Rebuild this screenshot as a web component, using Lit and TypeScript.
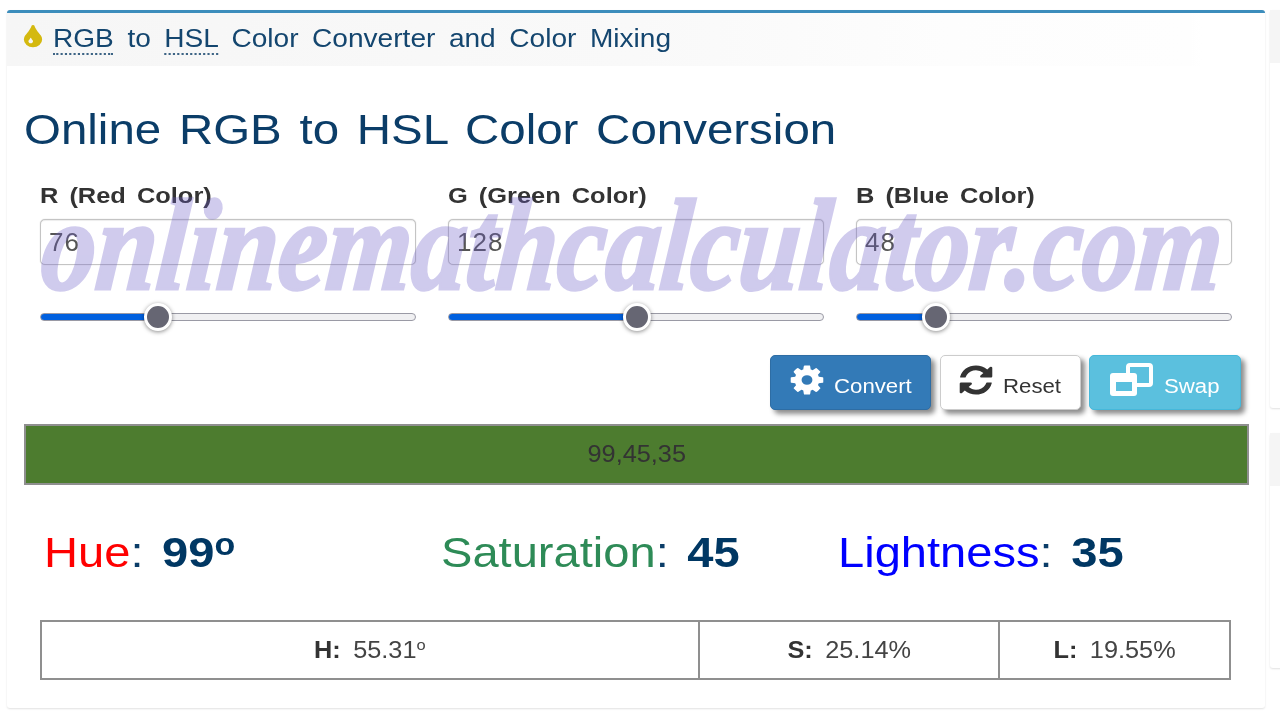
import { LitElement, html, css, svg } from "lit";
import { customElement } from "lit/decorators.js";

const TINT = "M896 1152q0-36-20-69-1-1-15.500-22.500t-25.500-38-25-44-21-50.500q-4-16-21-16t-21 16q-7 23-21 50.500t-25 44-25.500 38-15.500 22.500q-20 33-20 69 0 53 37.500 90.500t90.500 37.500 90.500-37.500 37.500-90.500zm512-128q0 212-150 362t-362 150-362-150-150-362q0-145 81-275 6-9 62.500-90.500t101-151 99.500-178 83-201.500q9-30 34-47t51-17 51.500 17 33.500 47q28 93 83 201.500t99.500 178 101 151 62.500 90.500q81 127 81 275z";
const COG = "M1152 896q0-106-75-181t-181-75-181 75-75 181 75 181 181 75 181-75 75-181zm512-109v222q0 12-8 23t-20 13l-185 28q-19 54-39 91 35 50 107 138 10 12 10 25t-9 23q-27 37-99 108t-94 71q-12 0-26-9l-138-108q-44 23-91 38-16 136-29 186-7 28-36 28h-222q-14 0-24.500-8.500t-11.500-21.500l-28-184q-49-16-90-37l-141 107q-10 9-25 9-14 0-25-11-126-114-165-168-7-10-7-23 0-12 8-23 15-21 51-66.500t54-70.500q-27-50-41-99l-183-27q-13-2-21-12.500t-8-23.500v-222q0-12 8-23t19-13l186-28q14-46 39-92-40-57-107-138-10-12-10-24 0-10 9-23 26-36 98.500-107.500t94.500-71.500q13 0 26 10l138 107q44-23 91-38 16-136 29-186 7-28 36-28h222q14 0 24.500 8.500t11.500 21.500l28 184q49 16 90 37l142-107q9-9 24-9 13 0 25 10 129 119 165 170 7 8 7 22 0 12-8 23-15 21-51 66.500t-54 70.500q26 50 41 98l183 28q13 2 21 12.500t8 23.500z";
const REFRESH = "M1639 1056q0 5-1 7-64 268-268 434.500t-478 166.500q-146 0-282.500-55t-243.500-157l-129 129q-19 19-45 19t-45-19-19-45v-448q0-26 19-45t45-19h448q26 0 45 19t19 45-19 45l-137 137q71 66 161 102t187 36q134 0 250-65t186-179q11-17 53-117 8-23 30-23h192q13 0 22.500 9.500t9.500 22.500zm25-800v448q0 26-19 45t-45 19h-448q-26 0-45-19t-19-45 19-45l138-138q-148-137-349-137-134 0-250 65t-186 179q-11 17-53 117-8 23-30 23h-199q-13 0-22.500-9.500t-9.500-22.500v-7q65-268 270-434.500t480-166.500q146 0 284 55.500t245 156.500l130-129q19-19 45-19t45 19 19 45z";

const fa = (d: string, w: number, h: number, color: string) => html`<svg width=${w} height=${h} viewBox="0 0 1792 1792" preserveAspectRatio="none" aria-hidden="true"><path d=${d} fill=${color}></path></svg>`;

const channels = [
  { label: "R (Red Color)", value: 76 },
  { label: "G (Green Color)", value: 128 },
  { label: "B (Blue Color)", value: 48 },
];

@customElement("app-root")
export class AppRoot extends LitElement {
  static styles = css`
    :host { display: block; width: 1280px; height: 720px; overflow: hidden; background: #fff; font-family: "Liberation Sans", Arial, sans-serif; color: #333; }
    * { box-sizing: border-box; }
    .page { display: flex; gap: 5px; padding: 10px 0 0 7px; width: 1300px; height: 720px; filter: blur(0.35px); }
    .card { position: relative; width: 1258px; height: 698px; background: #fff; border-top: 3px solid #3c8dbc; border-radius: 3px; box-shadow: 0 1px 2px rgba(0,0,0,.12); flex: none; overflow: hidden; }
    .w { display: inline-block; white-space: nowrap; transform-origin: left center; }
    .c { transform-origin: center center; }
    .head { height: 53px; display: flex; align-items: center; gap: 4px; padding: 0 0 0 10px; font-size: 26px; word-spacing: 5.3px; color: #14466f; background: linear-gradient(90deg, #f6f6f6 0%, #f9f9f9 50%, #fdfdfd 75%, #fefefe 94%, #fff 95%); }
    .head svg { flex: none; margin-top: -4px; }
    .head .w { transform: scaleX(1.08); margin-top: -2px; }
    abbr { text-decoration: none; border-bottom: 2px dotted #3d6485; line-height: 26px; }
    h1 { margin: 41px 0 0 17px; font-weight: 400; font-size: 42px; line-height: 46px; word-spacing: 4px; color: #0b3d68; }
    h1 .w { transform: scaleX(1.13); }
    .fields { display: grid; grid-template-columns: 376px 376px 376px; column-gap: 32px; margin: 30px 0 0 33px; }
    label { display: block; font-weight: 700; font-size: 22.5px; line-height: 26px; word-spacing: 3.5px; color: #333; }
    label .w { transform: scaleX(1.13); }
    input[type=text] { display: block; width: 100%; height: 46px; margin-top: 10px; padding: 0 8px; border: 1px solid #c4c4c4; border-radius: 5px; box-shadow: 0 0 1px #bbb, inset 0 1px 1px rgba(0,0,0,.075); font: 26px "Liberation Sans", Arial, sans-serif; letter-spacing: 1px; color: #555; background: #fff; outline: 0; }
    input[type=range] { display: block; width: 100%; height: 28px; margin: 38px 0 0; appearance: none; -webkit-appearance: none; background: transparent; }
    input[type=range]::-webkit-slider-runnable-track { height: 8px; border-radius: 4px; border: 1px solid #9a9aa5; background: linear-gradient(90deg, #0060df 0, #0060df var(--fill), #f0f0f2 var(--fill)); }
    input[type=range]::-webkit-slider-thumb { -webkit-appearance: none; width: 28px; height: 28px; margin-top: -11px; border-radius: 50%; background: #666673; border: 3px solid #fff; box-shadow: 0 1px 4px rgba(0,0,0,.45); }
    .actions { display: flex; justify-content: flex-end; gap: 8px; margin: 24px 0 0; padding-right: 24px; }
    button { display: flex; align-items: center; height: 55px; padding: 0; border: 1px solid transparent; border-radius: 5px; font: 20px "Liberation Sans", Arial, sans-serif; box-shadow: 4px 4px 5px rgba(0,0,0,.45); }
    .primary { width: 161px; margin-right: 1px; background: #337ab7; border-color: #2e6da4; color: #fff; padding-left: 17px; gap: 8px; }
    .default { width: 141px; background: #fff; border: 1px solid #ccc; color: #333; padding-left: 16px; gap: 8px; }
    .info { width: 152px; background: #5bc0de; border-color: #46b8da; color: #fff; padding-left: 19px; gap: 11px; }
    button .w { margin-top: 7px; transform: scaleX(1.11); }
    button svg { margin-top: -5px; flex: none; }
    .swatch { display: flex; align-items: center; justify-content: center; width: 1225px; height: 61px; margin: 14px 0 0 17px; background: #4d7c2f; border: 2px solid #8f8f8f; font-size: 23px; color: #333; }
    .swatch .w { transform: scaleX(1.1); }
    .results { display: grid; grid-template-columns: 397px 397px 397px; margin: 40px 0 0 37px; font-size: 43px; line-height: 54px; word-spacing: 5px; color: #0b3d68; }
    .results .w { transform: scaleX(1.095); }
    .results b { color: #003763; }
    .results sup { font-size: 31px; line-height: 0; vertical-align: 12px; }
    .hue { color: #f00; } .sat { color: #2e8b57; } .lig { color: #00f; }
    .cells { display: grid; grid-template-columns: 656px 300px 232px; width: 1191px; height: 60px; margin: 41px 0 0 33px; border: 2px solid #8f8f8f; font-size: 23px; color: #444; }
    .cells > div { display: flex; align-items: center; justify-content: center; }
    .cells > div + div { border-left: 2px solid #8f8f8f; }
    .cells .w { transform: scaleX(1.1); word-spacing: 5px; }
    .cells b { color: #333; }
    .cells sup { font-size: 15px; line-height: 0; vertical-align: 8px; }
    .mark { position: absolute; left: 30px; top: 167px; margin: 0; pointer-events: none; font: italic 700 130px/1 "Liberation Serif", serif; color: #6e5fc8; opacity: .32; -webkit-text-stroke: 3px #6e5fc8; white-space: nowrap; transform-origin: left bottom; transform: scaleX(.84) skewX(-6deg); }
    .side { width: 60px; flex: none; display: flex; flex-direction: column; gap: 25px; }
    .panel { background: #fff; border-radius: 3px; box-shadow: 0 1px 2px rgba(0,0,0,.12); }
    .panel i { display: block; height: 53px; background: #f5f5f5; }
    .p1 { height: 398px; } .p2 { height: 235px; }
  `;

  render() {
    return html`<div class="page">
      <section class="card">
        <div class="head">${fa(TINT, 32, 27, "#d4b90f")}<div class="w"><abbr>RGB</abbr> to <abbr>HSL</abbr> Color Converter and Color Mixing</div></div>
        <h1><span class="w">Online RGB to HSL Color Conversion</span></h1>
        <div class="fields">
          ${channels.map((c) => {
            const fill = 14 + 348 * (c.value / 255);
            return html`<div>
              <label><span class="w">${c.label}</span></label>
              <input type="text" .value=${String(c.value)} />
              <input type="range" min="0" max="255" .value=${String(c.value)} style="--fill:${fill}px" />
            </div>`;
          })}
        </div>
        <div class="actions">
          <button class="primary">${fa(COG, 38, 34, "#fff")}<span class="w">Convert</span></button>
          <button class="default">${fa(REFRESH, 38, 34, "#333")}<span class="w">Reset</span></button>
          <button class="info">
            <svg width="44" height="34" viewBox="0 0 44 34" aria-hidden="true">
              ${svg`<rect x="19" y="2" width="23" height="20" rx="2" fill="none" stroke="#fff" stroke-width="4"></rect><rect x="1" y="10" width="27" height="23" rx="3" fill="#fff"></rect><rect x="7" y="19" width="16" height="9" fill="#5bc0de"></rect>`}
            </svg>
            <span class="w">Swap</span>
          </button>
        </div>
        <div class="swatch"><span class="w c">99,45,35</span></div>
        <div class="results">
          <div><span class="w"><span class="hue">Hue</span>: <b>99<sup>o</sup></b></span></div>
          <div><span class="w"><span class="sat">Saturation</span>: <b>45</b></span></div>
          <div><span class="w"><span class="lig">Lightness</span>: <b>35</b></span></div>
        </div>
        <div class="cells">
          <div><span class="w c"><b>H:</b> 55.31<sup>o</sup></span></div>
          <div><span class="w c"><b>S:</b> 25.14%</span></div>
          <div><span class="w c"><b>L:</b> 19.55%</span></div>
        </div>
        <p class="mark">onlinemathcalculator.com</p>
      </section>
      <aside class="side">
        <div class="panel p1"><i></i></div>
        <div class="panel p2"><i></i></div>
      </aside>
    </div>`;
  }
}
